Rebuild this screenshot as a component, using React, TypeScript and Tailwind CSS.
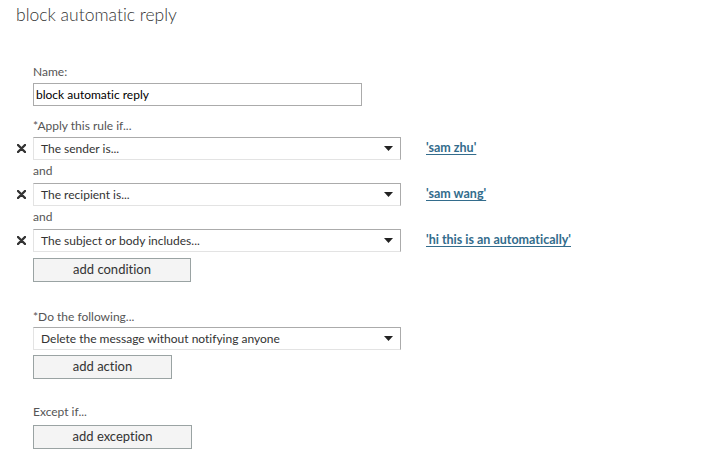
import React from "react";

const font = { fontFamily: 'Lato, "Open Sans", Arial, sans-serif', fontVariantLigatures: "none" as const };

const Caret = () => (
  <svg width="9" height="5" viewBox="0 0 9 5" className="shrink-0">
    <path d="M0 0h9L4.5 5z" fill="#222" />
  </svg>
);

const RemoveIcon = () => (
  <svg width="9" height="9" viewBox="0 0 9 9">
    <path d="M1 1l7 7M8 1L1 8" stroke="#333" strokeWidth="2.4" strokeLinecap="round" />
  </svg>
);

const Select: React.FC<{ value: string }> = ({ value }) => (
  <div className="w-[368px] h-[23px] flex items-center justify-between pl-[7px] pr-[7px] bg-white border-t border-r border-t-[#ababab] border-r-[#ababab] border-l border-b border-l-[#e3e3e3] border-b-[#e3e3e3] text-[12px] text-[#333]">
    <span>{value}</span>
    <Caret />
  </div>
);

const Label: React.FC<{ text: string; className?: string }> = ({ text, className }) => (
  <div className={`h-[18px] leading-[18px] text-[12px] text-[#555] ${className ?? ""}`}>{text}</div>
);

const GrayButton: React.FC<{ text: string; width: string; className?: string }> = ({
  text,
  width,
  className,
}) => (
  <button
    className={`${width} h-[24px] bg-[#f4f4f4] border border-[#9aa3a3] text-[13px] text-[#333] ${className ?? ""}`}
  >
    {text}
  </button>
);

const ConditionRow: React.FC<{ value: string; link: string; className?: string }> = ({
  value,
  link,
  className,
}) => (
  <div className={`flex items-center -ml-[16px] ${className ?? ""}`}>
    <div className="w-[16px] flex items-center">
      <RemoveIcon />
    </div>
    <Select value={value} />
    <a className="ml-[25px] text-[12.5px] font-bold text-[#336c8c] underline underline-offset-2 cursor-pointer">
      {link}
    </a>
  </div>
);

export default function App() {
  return (
    <div className="w-[726px] h-[468px] bg-white overflow-hidden" style={font}>
      <div className="pl-[16px] pt-[2px]">
        <h1 className="h-[26px] leading-[26px] text-[17.5px] font-light text-[#333]">
          block automatic reply
        </h1>
      </div>

      <div className="pl-[33px] pt-[35px]">
        <Label text="Name:" />
        <div className="mt-[2px] w-[329px] h-[23px] border border-[#ababab] flex items-center px-[2px] text-[12px] text-black">
          block automatic reply
        </div>

        <Label text="*Apply this rule if..." className="mt-[11px]" />
        <ConditionRow value="The sender is..." link="'sam zhu'" className="mt-[2px]" />
        <Label text="and" className="mt-[2px]" />
        <ConditionRow value="The recipient is..." link="'sam wang'" className="mt-[3px]" />
        <Label text="and" className="mt-[2px]" />
        <ConditionRow
          value="The subject or body includes..."
          link="'hi this is an automatically'"
          className="mt-[3px]"
        />
        <GrayButton text="add condition" width="w-[158px]" className="mt-[6px] block" />

        <Label text="*Do the following..." className="mt-[26px]" />
        <div className="mt-[1px]">
          <Select value="Delete the message without notifying anyone" />
        </div>
        <GrayButton text="add action" width="w-[139px]" className="mt-[5px] block" />

        <Label text="Except if..." className="mt-[24px]" />
        <GrayButton text="add exception" width="w-[159px]" className="mt-[4px] block" />
      </div>
    </div>
  );
}
